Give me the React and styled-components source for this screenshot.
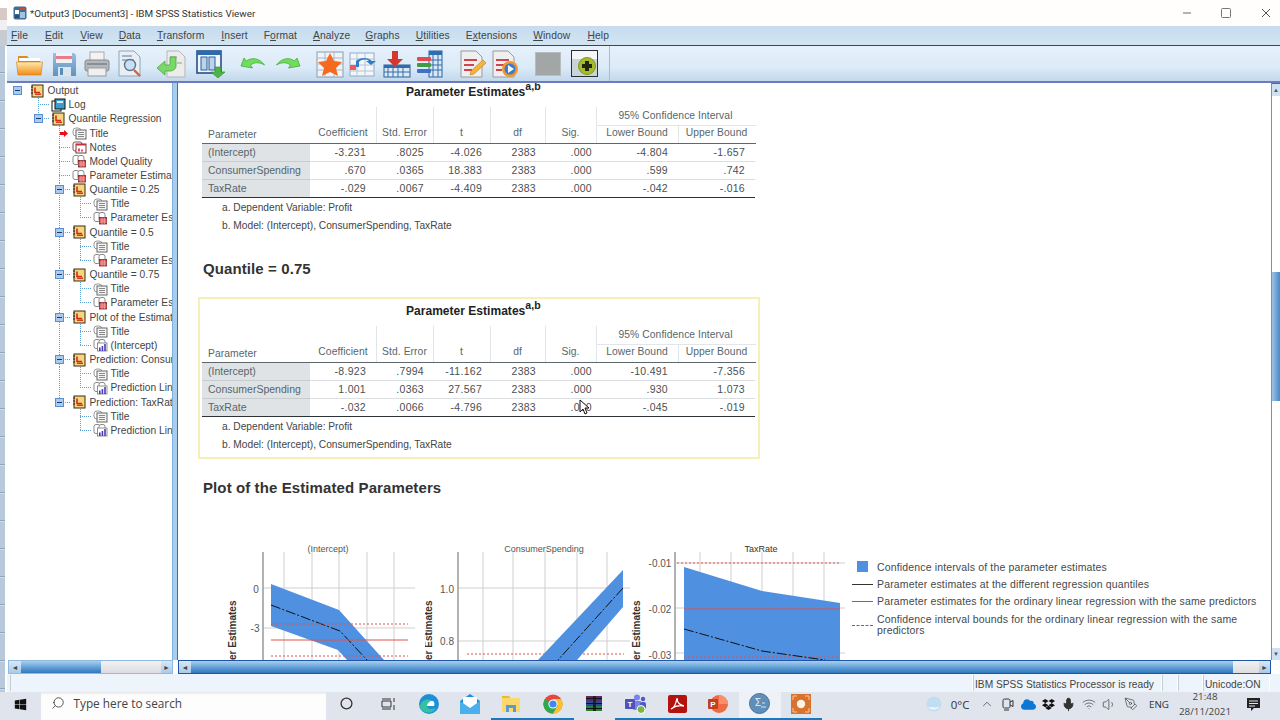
import React from "react";
import styled, { createGlobalStyle } from "styled-components";
import { ChevronUp, Mic, Wifi, Volume1, PenTool, Search, Circle } from "lucide-react";
import { FaWindows, FaDropbox, FaCloud } from "react-icons/fa";

const Global = createGlobalStyle`
  html, body { margin: 0; padding: 0; background: #fff; }
  #root { width: 1280px; height: 720px; overflow: hidden; }
  * { box-sizing: border-box; }
`;

const Screen = styled.div`
  width: 1280px; height: 720px; display: flex; flex-direction: column; overflow: hidden;
  font-family: "Liberation Sans", Arial, sans-serif;
`;
const Desktop = styled.div`display: flex; height: 692px;`;
const Sliver = styled.div`
  width: 7px; display: flex; flex-direction: column;
`;
const SliverTop = styled.div`
  height: 46px; background: linear-gradient(#fff 0 8px, #d8c9c4 8px 20px, #f0f0f0 20px 30px, #c7ccd2 30px);
`;
const SliverBody = styled.div`
  flex: 1; width: 5px;
  background: repeating-linear-gradient(#b7c9da 0 26px, #8ea6bd 26px 27px, #cfdbe6 27px 28px);
`;
const Win = styled.div`flex: 1; display: flex; flex-direction: column; min-width: 0; background: #fff;`;

const TitleBar = styled.div`
  height: 26px; display: flex; align-items: center; padding-left: 6px; background: #fffefc;
  font: 9.9px Roboto, sans-serif; color: #333;
`;
const TitleText = styled.span`margin-left: 3px; flex: 1;`;
const WinControl = styled.span`
  width: 40px; height: 26px; display: flex; align-items: center; justify-content: center;
`;
const WinControls = styled.div`display: flex; margin-right: -6px; & > span:first-child { margin-right: -1px; }`;

const MenuBar = styled.div`
  height: 20px; display: flex; align-items: center; padding: 0 0 1px 4px;
  background: linear-gradient(#c6dcee, #d2e4f2); border-bottom: 1px solid #3c4650;
`;
const MenuItem = styled.span`
  font-size: 10.3px; color: #3f4448; letter-spacing: 0.1px; margin-right: ${p => p.$gap}px; white-space: nowrap;
  & u { text-underline-offset: 1px; }
`;
const Toolbar = styled.div`
  height: 37px; display: flex; align-items: center; padding-left: 6.5px;
  background: linear-gradient(90deg, rgba(0,0,0,0) 0 602px, #aabccd 602px 603px, rgba(0,0,0,0) 603px),
              linear-gradient(#e6f1fb, #dcebf8 60%, #c2d8ec);
  border-bottom: 2px solid #6c7cbc;
`;
const ToolBtn = styled.span`
  width: 33.4px; height: 32px; flex: none; display: flex; align-items: center; justify-content: center;
  margin-left: ${p => p.$gap || 0}px;
`;
const ToolBoxed = styled(ToolBtn)`
  width: 27px; height: 27px; margin-left: ${p => p.$gap || 0}px; border: 1px solid #2b2f33;
  align-items: flex-end; justify-content: flex-end; padding: 0 0 1px 0;
  background: linear-gradient(#f4f6f8 0 30%, #c9d3da 30%);
`;

const Main = styled.div`flex: 1; display: flex; min-height: 0;`;
const TreePanel = styled.div`
  width: 165px; background: #fff; overflow: hidden; flex: none; padding-top: 0.5px;
  font-size: 10.2px; color: #444;
`;
const TreeRow = styled.div`
  height: 14.17px; display: flex; align-items: center; white-space: nowrap;
`;
const Guide = styled.span`
  flex: none; width: 21px; height: 100%; display: flex; align-items: center; justify-content: center;
  background-repeat: no-repeat;
  background-image:
    ${p => p.$v ? "repeating-linear-gradient(#5da0d8 0 1px, transparent 1px 2px)" : "none"},
    ${p => p.$h ? "repeating-linear-gradient(90deg, #5da0d8 0 1px, transparent 1px 2px)" : "none"};
  background-size: 1px ${p => p.$v === "half" ? "50%" : "100%"}, 11px 1px;
  background-position: 10px 0, 10px 50%;
`;
const Toggle = styled.span`
  width: 9px; height: 9px; display: flex; align-items: center; justify-content: center;
  background: #a9cbee; border: 1px solid #5b8fcf; 
  &::before { content: ""; width: 5px; height: 1px; background: #1b3b70; }
`;
const RedArrow = styled.svg`width: 8px; height: 7px; margin-left: 9px; background: #fff;`;
const TreeIcon = styled.svg`width: 15px; height: 14px; flex: none; margin-left: 1.5px;`;
const TreeLabel = styled.span`margin-left: 3px; letter-spacing: 0.04px;`;

const Splitter = styled.div`
  width: 6px; flex: none; background: #a9cdec;
  border-left: 1px solid #7fb0de; border-right: 1px solid #3a6fb8;
`;
const Content = styled.div`
  flex: 1; min-width: 0; overflow: hidden; background: #fff; padding: 0 0 0 20px; position: relative;
`;
const Doc = styled.div`margin-top: -5px;`;
const Pivot = styled.div`
  position: relative; width: 562px; height: 162px; margin-left: 0; padding: 0 0 0 2px;
  border: 2px solid ${p => p.$selected ? "#f6efb6" : "transparent"};
`;
const PivotTitle = styled.div`
  height: 27px; padding: 2px 0 0 204px; line-height: 21px; font-size: 12px; font-weight: 700; color: #222;
  letter-spacing: 0.03px; white-space: nowrap;
  & sup { font-size: 10.5px; line-height: 0; vertical-align: 6px; }
`;
const Table = styled.table`
  border-collapse: collapse; table-layout: fixed; width: 553px; font-size: 10.5px; color: #444;
`;
const Col = styled.col`width: ${p => p.$w}px;`;
const Head = styled.th`
  font-weight: 400; height: ${p => p.$h || 18}px; padding: ${p => p.$pb || 0}px 0 0; padding-top: 0; padding-bottom: ${p => p.$pb || 0}px;
  text-align: center; vertical-align: middle; color: #56666c;
  font-size: 10.3px; letter-spacing: 0.08px;
  border-right: 1px solid ${p => p.$last ? "transparent" : "#e2e6e8"};
  border-bottom: 1px solid ${p => p.$under ? "#e2e6e8" : p.$plain ? "transparent" : "#5d686d"};
`;
const HeadParam = styled(Head)`
  text-align: left; vertical-align: bottom; padding: 0 0 3px 6px; border-right-color: transparent; border-bottom-color: #5d686d;
`;
const RowHead = styled.td`
  height: 18px; padding: 0 0 0 6px; background: #dfe3e5; color: #56666c; white-space: nowrap;
  border-bottom: 1px solid ${p => p.$last ? "#2c3236" : "#c7cccf"};
`;
const Cell = styled.td`
  height: 18px; padding: 0 ${p => p.$pad}px 0 0; text-align: right; letter-spacing: 0.28px; color: #4a4f52;
  border-bottom: 1px solid ${p => p.$last ? "#2c3236" : "#dcdfe1"};
`;
const Footnotes = styled.div`padding-top: 1px;`;
const Footnote = styled.div`
  height: 18px; line-height: 18px; padding-left: 20px; font-size: 10.2px; color: #444; white-space: nowrap;
`;
const Heading = styled.div`
  height: 20px; line-height: 20px; padding-left: 5px; font-size: 15px; font-weight: 700; color: #333; white-space: nowrap;
  letter-spacing: 0.1px;
  margin: ${p => p.$top}px 0 ${p => p.$bottom}px;
`;
const PlotRow = styled.div`display: flex; padding-left: 27px; align-items: flex-start; height: 130px;`;
const PlotSvg = styled.svg`flex: none; display: block; overflow: hidden;`;
const Legend = styled.div`
  width: 415px; margin-left: 5px; padding-top: 19px; font-size: 10.5px; color: #45494c; letter-spacing: 0.15px;
`;
const LegendRow = styled.div`display: flex; min-height: 17px; align-items: center; padding-top: ${p => p.$top || 0}px;`;
const LegendKey = styled.span`
  width: 27px; flex: none; display: flex; justify-content: flex-start;
`;
const Swatch = styled.span`width: 11px; height: 11px; background: #4f90e0; margin: 0 0 3px 7px;`;
const KeyLine = styled.span`
  width: 21px; height: 0; margin-left: 2px; border-top: 1.5px ${p => p.$dot ? "dashed" : "solid"} ${p => p.$c};
`;
const LegendText = styled.span`line-height: 11px;`;
const Pointer = styled.svg`position: absolute; left: 379px; top: 100px; width: 14px; height: 16px;`;

const VScroll = styled.div`
  width: 9px; flex: none; display: flex; flex-direction: column; border-left: 1px solid #5f97d6; background: #fff; border-top: 1px solid #3a6fb8;
`;
const VArrow = styled.div`
  height: 12px; flex: none; background: #cfe2f4; display: flex; align-items: center; justify-content: center;
  color: #555; font-size: 6px; line-height: 1;
`;
const VTrack = styled.div`flex: ${p => p.$f}; background: #fff;`;
const VThumb = styled.div`flex: ${p => p.$f}; background: linear-gradient(90deg, #9cc3e6, #4a88c8);`;

const HRow = styled.div`height: 14px; display: flex;`;
const HScroll = styled.div`
  display: flex; align-items: stretch; border: 1px solid ${p => p.$c}; border-bottom-width: 1px;
  width: ${p => p.$w}px; margin-left: ${p => p.$ml}px; flex: none; background: #eee;
`;
const HArrow = styled.span`
  width: ${p => p.$w}px; flex: none; display: flex; align-items: center; justify-content: center; font-size: 7px; color: #444;
  background: linear-gradient(#d8e8f6, #a8cbea);
`;
const HThumb = styled.span`
  width: ${p => p.$w}px; flex: none; background: linear-gradient(#aacfee, #5f9ed8 55%, #2f77bc);
`;
const HTrack = styled.span`flex: 1; background: linear-gradient(#f2f2f4, #dcdce2);`;

const StatusBar = styled.div`
  height: 18px; display: flex; background: #edf4fb; font-size: 10.2px; color: #444; padding: 1px 0 1px 3px;
`;
const StatusCell = styled.span`
  width: ${p => p.$w}px; flex: none; height: 16px; line-height: 19px; padding-left: 1px; white-space: nowrap; overflow: hidden;
  border-left: 1px solid #c4ccd4; border-right: 1px solid #fff;
`;

const Taskbar = styled.div`
  height: 28px; display: flex; align-items: stretch; background: #e0e5ed; font-family: "Open Sans", sans-serif; color: #333; overflow: hidden;
`;
const StartBtn = styled.span`width: 41px; display: flex; align-items: center; justify-content: center; color: #111; padding-bottom: 4px;`;
const SearchBox = styled.div`
  width: 285px; background: #fdfdfd; display: flex; align-items: center; padding: 0 0 6px 10px; font-size: 11.8px; color: #444; gap: 8.5px;
  box-shadow: inset 0 3px 3px -2px #ddd;
`;
const TaskBtn = styled.span`
  width: ${p => p.$w || 41.4}px; flex: none; display: flex; align-items: center; justify-content: center;
  background: ${p => p.$focus ? "#eef1f5" : "transparent"};
  box-shadow: ${p => p.$on ? "inset 0 -2px 0 #1679c4" : "none"};
  padding-bottom: 5px;
`;
const Tray = styled.div`margin-left: auto; display: flex; align-items: center; padding: 0 14px 4px 0;`;
const TrayItem = styled.span`
  width: ${p => p.$w}px; flex: none; display: flex; align-items: center; justify-content: center; font-size: ${p => p.$fs || 11}px; color: #333;
  margin-left: ${p => p.$ml || 0}px;
`;
const Clock = styled.span`
  width: 58px; height: 30px; flex: none; align-self: flex-start; display: flex; flex-direction: column; align-items: center; justify-content: flex-start;
  font-size: 9.8px; line-height: 15px; color: #444; margin-top: -3px;
`;

/* ---------- toolbar icons ---------- */
const Ico = ({ children, w = 30, h = 28, vb = "0 0 30 28" }) => <svg width={w} height={h} viewBox={vb}>{children}</svg>;

const icons = {
  folder: <Ico><defs><linearGradient id="fo" x1="0" y1="0" x2="0" y2="1"><stop offset="0" stopColor="#ffe9b0"/><stop offset="1" stopColor="#f28c14"/></linearGradient></defs>
    <path d="M3 6h9l2 2h11v5H3z" fill="#d98c20"/><rect x="4" y="8" width="21" height="3" fill="#fff"/><path d="M1.5 12h26l-1.5 13H3z" fill="url(#fo)" stroke="#c9781a" strokeWidth=".6"/></Ico>,
  save: <Ico><defs><linearGradient id="sa" x1="0" y1="0" x2="0" y2="1"><stop offset="0" stopColor="#9cc0de"/><stop offset="1" stopColor="#5f92c0"/></linearGradient></defs><path d="M4 3h21l2 2v21H4z" fill="url(#sa)"/><path d="M7 3h16v10H7z" fill="#f2f2f4"/><path d="M7 6h16v3H7z" fill="#ea7d8c"/><rect x="9" y="17" width="13" height="9" fill="#dbe5ee"/><rect x="11" y="18" width="3" height="7" fill="#5c8db8"/></Ico>,
  print: <Ico><rect x="8" y="2" width="14" height="9" fill="#f3f3f3" stroke="#aaa"/><rect x="3" y="10" width="24" height="11" rx="2" fill="#b4b8bd" stroke="#888"/><rect x="6" y="18" width="18" height="8" fill="#f0f0f0" stroke="#999"/><rect x="5" y="13" width="20" height="2" fill="#8a8f96"/></Ico>,
  preview: <Ico><path d="M4 1h15l6 6v19H4z" fill="#e8eef3" stroke="#8fa6ba"/><path d="M7 5h10v2H7zM7 9h12v2H7z" fill="#9db6cd"/><circle cx="15" cy="15" r="5.5" fill="#c6e0f6" stroke="#66748a" strokeWidth="1.4"/><path d="M19 20l6 6" stroke="#d8623c" strokeWidth="2.4"/></Ico>,
  exportDoc: <Ico><path d="M11 1h12l6 6v20H11z" fill="#ececea" stroke="#b5b5b5"/><path d="M14 6h7v2h-7zM21 12h5v2h-5z" fill="#c2c2c2"/><path d="M20 7v9c0 3-3 5-6 5H9v4L1 18l8-7v4h4c1 0 1-1 1-2V7z" fill="#7ad868" stroke="#4aa840" strokeWidth=".8"/></Ico>,
  designate: <Ico w={32} vb="0 0 32 28"><rect x="1" y="1" width="24" height="22" fill="#f2f6fa" stroke="#23508a" strokeWidth="1.6"/><rect x="1" y="1" width="24" height="4" fill="#2d6ab0"/><rect x="5" y="7" width="6" height="13" fill="#bcd4ea" stroke="#2c5f9c"/><rect x="13" y="7" width="6" height="13" fill="#bcd4ea" stroke="#2c5f9c"/><path d="M19 17h6v5h4l-7 6-7-6h4z" fill="#4cb545" stroke="#2f8c2c" strokeWidth=".6"/></Ico>,
  undo: <Ico><path d="M3 16l3-8 2.5 3c5-4 13-3 18 4-5-3-10-3-14 0l2 3z" fill="#72dc5c" stroke="#45ad3a" strokeWidth=".8"/></Ico>,
  redo: <Ico><path d="M27 16l-3-8-2.5 3c-5-4-13-3-18 4 5-3 10-3 14 0l-2 3z" fill="#72dc5c" stroke="#45ad3a" strokeWidth=".8"/></Ico>,
  star: <Ico><rect x="2" y="2" width="26" height="25" fill="#f0f4f8" stroke="#8a9cb0"/><path d="M2 8h26M2 14h26M2 20h26M10 2v25M19 2v25" stroke="#a8b8ca"/><path d="M15 3l4 8 8 1-6 6 2 8-8-4-8 4 2-8-6-6 8-1z" fill="#f56a1e"/></Ico>,
  back: <Ico><rect x="2" y="3" width="24" height="23" fill="#f3f6fa" stroke="#97aabf"/><path d="M2 9h24M2 15h24M2 21h24M9 3v23M17 3v23" stroke="#b4c4d6"/><rect x="2" y="15" width="6" height="5" fill="#ea5a5a"/><path d="M8 17V11c4-4 12-4 16 0l4 0-5 4-5-4h3c-3-2-7-2-10 1v5z" fill="#2f7cc8"/></Ico>,
  insert: <Ico><rect x="2" y="15" width="26" height="12" fill="#dfe8f0" stroke="#28609c"/><rect x="2" y="15" width="26" height="3" fill="#2f6cb0"/><path d="M6 18v9M11 18v9M16 18v9M21 18v9M2 22h26" stroke="#2f6cb0"/><path d="M10 1h6v8h5l-8 8-8-8h5z" fill="#d8352e"/></Ico>,
  grid: <Ico><rect x="14" y="1" width="13" height="26" fill="#dbe8f4" stroke="#2c62a2"/><rect x="14" y="1" width="13" height="4" fill="#2f6cb0"/><path d="M18 5v22M23 5v22M14 10h13M14 15h13M14 20h13" stroke="#2f6cb0"/><rect x="2" y="7" width="14" height="4" rx="1" fill="#e24b4b"/><rect x="2" y="13" width="14" height="4" rx="1" fill="#3f9c45"/><rect x="2" y="19" width="14" height="4" rx="1" fill="#4270c4"/></Ico>,
  edit: <Ico><path d="M4 1h15l6 6v20H4z" fill="#efeff0" stroke="#999"/><path d="M7 9h13v2H7zM7 14h10v2H7zM7 19h8v2H7z" fill="#d2444c"/><path d="M14 21l12-11 3 3-12 11-4 1z" fill="#f5b53a" stroke="#b87a1a" strokeWidth=".6"/></Ico>,
  play: <Ico><path d="M3 1h15l6 6v20H3z" fill="#efeff0" stroke="#999"/><path d="M6 9h13v2H6zM6 14h8v2H6zM6 19h6v2H6z" fill="#d2444c"/><circle cx="20" cy="19" r="8" fill="#f1982b"/><circle cx="20" cy="19" r="5.5" fill="#3c7cc8"/><path d="M18 15l6 4-6 4z" fill="#f4f8fc"/></Ico>,
  gray: <Ico w={26} h={24} vb="0 0 26 24"><rect x="0.5" y="0.5" width="25" height="23" fill="#a3a6a7" stroke="#b9bcbd"/></Ico>,
  plus: <Ico w={19} h={19} vb="3 3 19 19"><circle cx="12" cy="13" r="8.5" fill="#a6bb2a" stroke="#7f9620"/><path d="M10 8h4v3h3v4h-3v3h-4v-3H7v-4h3z" fill="#1e2a0e"/></Ico>,
};

/* ---------- tree icons ---------- */
const treeGlyph = {
  doc: <><rect x="2" y="1" width="11" height="12" fill="#f6d67c" stroke="#3b2d10"/><path d="M1 3h2M1 6h2M1 9h2" stroke="#222"/><path d="M5 3.5v5h5" stroke="#d8281e" strokeWidth="1.6" fill="none"/><rect x="5" y="9.5" width="6" height="1.4" fill="#d8281e"/></>,
  log: <><rect x="1" y="3" width="9" height="10" fill="#fff" stroke="#111"/><rect x="4" y="1" width="10" height="10" fill="#3d9bd0" stroke="#111"/><rect x="6" y="3" width="6" height="2" fill="#d8eefa"/></>,
  title: <><rect x="1" y="2" width="8" height="8" rx="3" fill="#fff" stroke="#999"/><rect x="4" y="4" width="10" height="9" fill="#f4f4f4" stroke="#666"/><path d="M6 6.5h6M6 8.5h6M6 10.5h6" stroke="#888"/></>,
  notes: <><rect x="1" y="2" width="9" height="9" rx="2" fill="#fff" stroke="#8c4a50"/><rect x="4" y="4" width="10" height="9" fill="#fff" stroke="#6c3a40"/><rect x="4" y="4" width="10" height="1.5" fill="#c2333c"/><path d="M6 8.5h2v3H6zM9 9.5h2v2H9z" fill="#d8555c"/></>,
  table: <><rect x="1" y="1.5" width="6" height="9" rx="2" fill="#fff" stroke="#888"/><rect x="6" y="1.5" width="6" height="9" rx="2" fill="#fff" stroke="#888"/><rect x="6.5" y="6.5" width="7" height="6.5" fill="#d94a4a" stroke="#7c1f22" strokeWidth=".8"/><path d="M6.5 9h7M6.5 11h7M9 6.5V13M11.3 6.5V13" stroke="#f5c8c8" strokeWidth=".6"/></>,
  chart: <><rect x="1" y="1.5" width="6" height="9" rx="2" fill="#fff" stroke="#888"/><rect x="6" y="1.5" width="6" height="9" rx="2" fill="#fff" stroke="#888"/><rect x="4.5" y="5" width="9.5" height="8" fill="#fff" stroke="#777" strokeWidth=".8"/><path d="M6 9.5h1.6V13H6zM8.6 8h1.6v5H8.6zM11.2 6h1.6v7h-1.6z" fill="#4a3ac0"/></>,
};

const tree = [
  { g: [{ t: true }], i: "doc", l: "Output" },
  { g: [{}, { v: "full", h: true }], i: "log", l: "Log" },
  { g: [{}, { v: "half", h: true, t: true }], i: "doc", l: "Quantile Regression" },
  { g: [{}, {}, { v: "full", arrow: true }], i: "title", l: "Title" },
  { g: [{}, {}, { v: "full", h: true }], i: "notes", l: "Notes" },
  { g: [{}, {}, { v: "full", h: true }], i: "table", l: "Model Quality" },
  { g: [{}, {}, { v: "full", h: true }], i: "table", l: "Parameter Estimates" },
];
const group = (label, childLabel, kind, last) => [
  { g: [{}, {}, { v: last ? "half" : "full", h: true, t: true }], i: "doc", l: label },
  { g: [{}, {}, { v: last ? null : "full" }, { v: "full", h: true }], i: "title", l: "Title" },
  { g: [{}, {}, { v: last ? null : "full" }, { v: "half", h: true }], i: kind, l: childLabel },
];
const allRows = [
  ...tree,
  ...group("Quantile = 0.25", "Parameter Estimates", "table"),
  ...group("Quantile = 0.5", "Parameter Estimates", "table"),
  ...group("Quantile = 0.75", "Parameter Estimates", "table"),
  ...group("Plot of the Estimated Parameters", "(Intercept)", "chart"),
  ...group("Prediction: ConsumerSpending", "Prediction Lines", "chart"),
  ...group("Prediction: TaxRate", "Prediction Lines", "chart", true),
];

const Menu = [
  ["F", "ile", 17], ["E", "dit", 17], ["V", "iew", 16], ["D", "ata", 16], ["T", "ransform", 17], ["I", "nsert", 16],
  ["Fo", "rmat", 16, "o"], ["A", "nalyze", 15], ["G", "raphs", 16], ["U", "tilities", 16], ["Ex", "tensions", 16, "x"], ["W", "indow", 17], ["H", "elp", 0],
];

const cols = [108, 66, 57, 57, 55, 51, 82, 77];
const pads = [10, 9, 8, 9, 4, 10, 10];

function PivotTable({ rows, selected, children }) {
  return (
    <Pivot $selected={selected}>
      <PivotTitle>Parameter Estimates<sup>a,b</sup></PivotTitle>
      <Table>
        <colgroup>{cols.map((w, i) => <Col key={i} $w={w} />)}</colgroup>
        <thead>
          <tr>
            <HeadParam rowSpan={2} $h={18}>Parameter</HeadParam>
            <Head $h={17} $plain />
            <Head $plain />
            <Head $plain />
            <Head $plain />
            <Head $plain />
            <Head colSpan={2} $under $last $pb={1}>95% Confidence Interval</Head>
          </tr>
          <tr>
            {["Coefficient", "Std. Error", "t", "df", "Sig.", "Lower Bound", "Upper Bound"].map((h, i) => (
              <Head key={h} $h={18} $pb={3} $last={i === 6}>{h}</Head>
            ))}
          </tr>
        </thead>
        <tbody>
          {rows.map((r, ri) => (
            <tr key={r[0]}>
              <RowHead $last={ri === 2}>{r[0]}</RowHead>
              {r.slice(1).map((v, i) => <Cell key={i} $pad={pads[i]} $last={ri === 2}>{v}</Cell>)}
            </tr>
          ))}
        </tbody>
      </Table>
      <Footnotes>
        <Footnote>a. Dependent Variable: Profit</Footnote>
        <Footnote>b. Model: (Intercept), ConsumerSpending, TaxRate</Footnote>
      </Footnotes>
      {children}
    </Pivot>
  );
}

const T = { fontFamily: "Liberation Sans, sans-serif", fontSize: 10, fill: "#555" };
const Y = { ...T, fontWeight: 700, fontSize: 10, fill: "#333" };
const Grid = "#cfcfcf";

/* plot drawings use page coordinates through the viewBox, top of the row = 540 */
function PlotA() {
  return (
    <PlotSvg width="200" height="130" viewBox="225 540 200 130">
      <text x="328" y="552" textAnchor="middle" style={{ ...T, fontSize: 9 }}>(Intercept)</text>
      {[284, 312, 339, 367, 394].map(x => <line key={x} x1={x} x2={x} y1="552" y2="660" stroke={Grid} />)}
      {[588, 628].map(y => <line key={y} x1="263" x2="415" y1={y} y2={y} stroke={Grid} />)}
      <line x1="263" x2="263" y1="552" y2="660" stroke="#999" strokeWidth="1.5" />
      <text x="256" y="593" textAnchor="middle" style={T}>0</text>
      <text x="255" y="632" textAnchor="middle" style={T}>-3</text>
      <text transform="translate(236 660) rotate(-90)" style={Y}>er Estimates</text>
      <path d="M271 584L339 610L384 660H347L338 650L271 626Z" fill="#4f90e0" />
      <path d="M271 605L340 631L367 660" fill="none" stroke="#111" strokeWidth="1" strokeDasharray="10 2 2 2" />
      <line x1="271" x2="408" y1="640" y2="640" stroke="#e2524f" strokeWidth="1.2" />
      <line x1="271" x2="408" y1="624" y2="624" stroke="#e2524f" strokeDasharray="2 2" />
      <line x1="271" x2="408" y1="656" y2="656" stroke="#e2524f" strokeDasharray="2 2" />
    </PlotSvg>
  );
}
function PlotB() {
  return (
    <PlotSvg width="205" height="130" viewBox="425 540 205 130">
      <text x="544" y="552" textAnchor="middle" style={{ ...T, fontSize: 9 }}>ConsumerSpending</text>
      {[483, 513, 545, 577, 607].map(x => <line key={x} x1={x} x2={x} y1="552" y2="660" stroke={Grid} />)}
      {[588, 641].map(y => <line key={y} x1="458" x2="630" y1={y} y2={y} stroke={Grid} />)}
      <line x1="458" x2="458" y1="552" y2="660" stroke="#999" strokeWidth="1.5" />
      <text x="447" y="593" textAnchor="middle" style={T}>1.0</text>
      <text x="447" y="645" textAnchor="middle" style={T}>0.8</text>
      <text transform="translate(432 660) rotate(-90)" style={Y}>er Estimates</text>
      <line x1="467" x2="624" y1="654" y2="654" stroke="#e2524f" strokeDasharray="2 2" />
      <path d="M623 570V607L577 660H538Z" fill="#4f90e0" />
      <path d="M623 588L558 660" fill="none" stroke="#111" strokeDasharray="10 2 2 2" />
    </PlotSvg>
  );
}
function PlotC() {
  return (
    <PlotSvg width="215" height="130" viewBox="630 540 215 130">
      <text x="761" y="552" textAnchor="middle" style={{ ...T, fontSize: 9, fill: "#333" }}>TaxRate</text>
      {[700, 731, 762, 793, 824].map(x => <line key={x} x1={x} x2={x} y1="552" y2="660" stroke={Grid} />)}
      {[563, 608, 653].map(y => <line key={y} x1="675" x2="845" y1={y} y2={y} stroke={Grid} />)}
      <line x1="675" x2="675" y1="552" y2="660" stroke="#999" strokeWidth="1.5" />
      <text x="660" y="567" textAnchor="middle" style={T}>-0.01</text>
      <text x="660" y="613" textAnchor="middle" style={T}>-0.02</text>
      <text x="660" y="659" textAnchor="middle" style={T}>-0.03</text>
      <text transform="translate(640 660) rotate(-90)" style={Y}>er Estimates</text>
      <line x1="677" x2="840" y1="563" y2="563" stroke="#e2524f" strokeDasharray="2 2" />
      <path d="M684 567L762 591L840 603V660H684Z" fill="#4f90e0" />
      <line x1="684" x2="840" y1="609" y2="609" stroke="#e2524f" strokeWidth="1.2" />
      <line x1="684" x2="840" y1="657" y2="657" stroke="#e2524f" strokeDasharray="2 2" />
      <path d="M684 629L762 651L825 660" fill="none" stroke="#111" strokeDasharray="10 2 2 2" />
    </PlotSvg>
  );
}

const task = {
  edge: <svg width="22" height="22" viewBox="0 0 22 22"><circle cx="11" cy="11" r="10" fill="#1b8fd8"/><path d="M2 13c1-6 8-8 12-5 2 2 2 4 0 5H9c0 3 4 4 9 2-2 5-9 6-13 3-2-1-3-3-3-5z" fill="#35c1a1"/><path d="M9 13c0-3 3-5 5-5 2 0 3 2 2 5z" fill="#fff"/></svg>,
  mail: <svg width="22" height="20" viewBox="0 0 22 20"><path d="M1 7L11 0l10 7v13H1z" fill="#1f90d8"/><path d="M4 3h14v9l-7 4-7-4z" fill="#fff"/><path d="M1 7l10 7 10-7v13H1z" fill="#4ab0ec"/></svg>,
  explorer: <svg width="20" height="18" viewBox="0 0 20 18"><path d="M1 1h7l2 3H1z" fill="#e9b93a"/><rect x="1" y="3" width="18" height="14" fill="#fcd96c"/><rect x="5" y="10" width="10" height="7" fill="#5b9bd0"/><rect x="8" y="13" width="4" height="4" fill="#fcd96c"/></svg>,
  chrome: <svg width="20" height="20" viewBox="0 0 20 20"><circle cx="10" cy="10" r="9.5" fill="#e8453c"/><path d="M10 10L1.8 5A9.5 9.5 0 0 0 10 19.5L15 11z" fill="#2fa84f"/><path d="M10 10l5 1-5 8.5A9.5 9.5 0 0 0 18.2 5H10z" fill="#fbc02d"/><circle cx="10" cy="10" r="4.6" fill="#fff"/><circle cx="10" cy="10" r="3.6" fill="#4285f4"/></svg>,
  rar: <svg width="18" height="16" viewBox="0 0 18 16"><rect x="1" y="0" width="16" height="5" fill="#5a2a6a"/><rect x="1" y="5" width="16" height="5" fill="#274c9c"/><rect x="1" y="10" width="16" height="5" fill="#2b7d3a"/><rect x="8" y="0" width="3" height="15" fill="#222"/><path d="M1 2.5h16M1 7.5h16M1 12.5h16" stroke="#111"/></svg>,
  teams: <svg width="22" height="20" viewBox="0 0 22 20"><circle cx="12" cy="3.5" r="3" fill="#7b83eb"/><circle cx="18" cy="5" r="2.2" fill="#5059c9"/><rect x="8" y="7" width="8" height="9" rx="1" fill="#7b83eb"/><rect x="15" y="8" width="6" height="7" rx="2" fill="#5059c9"/><rect x="0" y="5" width="10" height="10" rx="1" fill="#4b53bc"/><text x="5" y="13" textAnchor="middle" fontSize="8" fontWeight="700" fill="#fff" fontFamily="Liberation Sans">T</text><circle cx="16" cy="15.5" r="4" fill="#7db544" stroke="#fff"/></svg>,
  pdf: <svg width="19" height="18" viewBox="0 0 19 18"><rect width="19" height="18" rx="2" fill="#b3130f"/><path d="M3 14c3-1 5-5 6-11 0 5 3 7 7 8-5-1-9 0-13 3z" fill="none" stroke="#fff" strokeWidth="1.3"/></svg>,
  ppt: <svg width="20" height="18" viewBox="0 0 20 18"><circle cx="11" cy="9" r="9" fill="#ed6c47"/><path d="M11 0a9 9 0 0 1 9 9h-9z" fill="#ff8f6b"/><rect x="0" y="4" width="10" height="10" rx="1" fill="#c43e1c"/><text x="5" y="12" textAnchor="middle" fontSize="8" fontWeight="700" fill="#fff" fontFamily="Liberation Sans">P</text></svg>,
  spss: <svg width="21" height="21" viewBox="0 0 21 21"><circle cx="10.5" cy="10.5" r="10" fill="#5f8fb8"/><circle cx="10.5" cy="10.5" r="10" fill="none" stroke="#47739a"/><text x="9" y="13" textAnchor="middle" fontSize="10" fill="#eaf2f8" fontFamily="Liberation Sans">Σ</text><path d="M12 14h5M13 10h3" stroke="#d6e4ee"/></svg>,
  snag: <svg width="20" height="20" viewBox="0 0 20 20"><rect width="20" height="20" fill="#d9722e"/><circle cx="10" cy="10" r="4.2" fill="#fff3e4"/><path d="M2 6V2h4M14 2h4v4M2 14v4h4M18 14v4h-4" fill="none" stroke="#f8c8a0"/></svg>,
};

export default function App() {
  return (
    <Screen>
      <Global />
      <Desktop>
        <Sliver><SliverTop /><SliverBody /></Sliver>
        <Win>
          <TitleBar>
            <svg width="14" height="14" viewBox="0 0 14 14"><rect x="0.5" y="0.5" width="13" height="13" rx="2" fill="#3f6f98"/><rect x="2" y="4" width="4" height="4" fill="#fff"/><rect x="7" y="2" width="5" height="2" fill="#d8452e"/><rect x="7" y="6" width="5" height="6" fill="#9fc4e2"/><rect x="2" y="9" width="4" height="3" fill="#2b4d6c"/></svg>
            <TitleText>*Output3 [Document3] - IBM SPSS Statistics Viewer</TitleText>
            <WinControls>
              <WinControl><svg width="10" height="10"><path d="M1 5h8" stroke="#666" /></svg></WinControl>
              <WinControl><svg width="10" height="10"><rect x=".5" y=".5" width="9" height="9" rx="1" fill="none" stroke="#777" /></svg></WinControl>
              <WinControl><svg width="10" height="10"><path d="M1 1l8 8M9 1l-8 8" stroke="#555" /></svg></WinControl>
            </WinControls>
          </TitleBar>
          <MenuBar>
            {Menu.map(([a, b, g, rest]) => (
              <MenuItem key={a + b} $gap={g}>
                {rest ? <>{a[0]}<u>{a[1]}</u>{b}</> : <><u>{a}</u>{b}</>}
              </MenuItem>
            ))}
          </MenuBar>
          <Toolbar>
            <ToolBtn>{icons.folder}</ToolBtn>
            <ToolBtn>{icons.save}</ToolBtn>
            <ToolBtn>{icons.print}</ToolBtn>
            <ToolBtn>{icons.preview}</ToolBtn>
            <ToolBtn $gap={7.5}>{icons.exportDoc}</ToolBtn>
            <ToolBtn $gap={7.5}>{icons.designate}</ToolBtn>
            <ToolBtn $gap={7.5}>{icons.undo}</ToolBtn>
            <ToolBtn $gap={1.5}>{icons.redo}</ToolBtn>
            <ToolBtn $gap={8.5}>{icons.star}</ToolBtn>
            <ToolBtn>{icons.back}</ToolBtn>
            <ToolBtn>{icons.insert}</ToolBtn>
            <ToolBtn>{icons.grid}</ToolBtn>
            <ToolBtn $gap={8.5}>{icons.edit}</ToolBtn>
            <ToolBtn>{icons.play}</ToolBtn>
            <ToolBtn $gap={9.5}>{icons.gray}</ToolBtn>
            <ToolBoxed $gap={6}>{icons.plus}</ToolBoxed>
          </Toolbar>
          <Main>
            <TreePanel>
              {allRows.map((r, i) => (
                <TreeRow key={i}>
                  {r.g.map((g, j) => (
                    <Guide key={j} $v={g.v} $h={g.h}>
                      {g.t && <Toggle />}
                      {g.arrow && <RedArrow viewBox="0 0 8 7"><path d="M0 2h4V0l4 3.5L4 7V5H0z" fill="#e8101a" /></RedArrow>}
                    </Guide>
                  ))}
                  <TreeIcon viewBox="0 0 15 14">{treeGlyph[r.i]}</TreeIcon>
                  <TreeLabel>{r.l}</TreeLabel>
                </TreeRow>
              ))}
            </TreePanel>
            <Splitter />
            <Content>
              <Doc>
                <PivotTable rows={[
                  ["(Intercept)", "-3.231", ".8025", "-4.026", "2383", ".000", "-4.804", "-1.657"],
                  ["ConsumerSpending", ".670", ".0365", "18.383", "2383", ".000", ".599", ".742"],
                  ["TaxRate", "-.029", ".0067", "-4.409", "2383", ".000", "-.042", "-.016"],
                ]} />
                <Heading $top={19} $bottom={18}>Quantile = 0.75</Heading>
                <PivotTable selected rows={[
                  ["(Intercept)", "-8.923", ".7994", "-11.162", "2383", ".000", "-10.491", "-7.356"],
                  ["ConsumerSpending", "1.001", ".0363", "27.567", "2383", ".000", ".930", "1.073"],
                  ["TaxRate", "-.032", ".0066", "-4.796", "2383", ".000", "-.045", "-.019"],
                ]}>
                  <Pointer viewBox="0 0 14 16">
                    <path d="M1 1v12l3-3 2 5 2-1-2-5h4z" fill="#fff" stroke="#111" />
                  </Pointer>
                </PivotTable>
                <Heading $top={19} $bottom={42}>Plot of the Estimated Parameters</Heading>
                <PlotRow>
                  <PlotA /><PlotB /><PlotC />
                  <Legend>
                    <LegendRow><LegendKey><Swatch /></LegendKey><LegendText>Confidence intervals of the parameter estimates</LegendText></LegendRow>
                    <LegendRow><LegendKey><KeyLine $c="#333" /></LegendKey><LegendText>Parameter estimates at the different regression quantiles</LegendText></LegendRow>
                    <LegendRow><LegendKey><KeyLine $c="#dd3c3c" /></LegendKey><LegendText>Parameter estimates for the ordinary linear regression with the same predictors</LegendText></LegendRow>
                    <LegendRow $top={4}><LegendKey><KeyLine $c="#dd3c3c" $dot /></LegendKey><LegendText>Confidence interval bounds for the ordinary linear regression with the same predictors</LegendText></LegendRow>
                  </Legend>
                </PlotRow>
              </Doc>
            </Content>
            <VScroll>
              <VArrow>▲</VArrow>
              <VTrack $f={176} />
              <VThumb $f={128} />
              <VTrack $f={247} />
              <VArrow>▼</VArrow>
            </VScroll>
          </Main>
          <HRow>
            <HScroll $c="#8fbbe0" $w={165} $ml={1}>
              <HArrow $w={12}>◄</HArrow><HThumb $w={80} /><HTrack /><HArrow $w={11}>►</HArrow>
            </HScroll>
            <HScroll $c="#1f56a8" $w={1093} $ml={5}>
              <HArrow $w={12}>◄</HArrow><HThumb $w={1042} /><HTrack /><HArrow $w={11}>►</HArrow>
            </HScroll>
          </HRow>
          <StatusBar>
            <StatusCell $w={963} />
            <StatusCell $w={189}>IBM SPSS Statistics Processor is ready</StatusCell>
            <StatusCell $w={16} />
            <StatusCell $w={25} />
            <StatusCell $w={67}>Unicode:ON</StatusCell>
          </StatusBar>
        </Win>
      </Desktop>
      <Taskbar>
        <StartBtn><FaWindows size={13} /></StartBtn>
        <SearchBox><Search size={14} strokeWidth={1.5} style={{ transform: "scaleX(-1)" }} />Type here to search</SearchBox>
        <TaskBtn $w={41}><Circle size={13} strokeWidth={2.4} /></TaskBtn>
        <TaskBtn $w={41}>
          <svg width="14" height="14" viewBox="0 0 14 14"><path d="M1 2h9M1 12h9M1 4v6h9V4H1M13 1v4M13 8v5" fill="none" stroke="#333" /></svg>
        </TaskBtn>
        <TaskBtn>{task.edge}</TaskBtn>
        <TaskBtn>{task.mail}</TaskBtn>
        <TaskBtn $on>{task.explorer}</TaskBtn>
        <TaskBtn $on>{task.chrome}</TaskBtn>
        <TaskBtn>{task.rar}</TaskBtn>
        <TaskBtn $on>{task.teams}</TaskBtn>
        <TaskBtn $on>{task.pdf}</TaskBtn>
        <TaskBtn $on>{task.ppt}</TaskBtn>
        <TaskBtn $on $focus>{task.spss}</TaskBtn>
        <TaskBtn $on>{task.snag}</TaskBtn>
        <Tray>
          <TrayItem $w={27}><svg width="16" height="16" viewBox="0 0 16 16"><circle cx="8" cy="8" r="7.5" fill="#c2dcf0"/><path d="M2 11c2 3 8 4 12 0-3 1-8 0-12 0z" fill="#eef6fc"/></svg></TrayItem>
          <TrayItem $w={26} $fs={11.5}>0°C</TrayItem>
          <TrayItem $w={20.6} $ml={4}><ChevronUp size={14} strokeWidth={1.2} /></TrayItem>
          <TrayItem $w={20.6}>
            <svg width="12" height="14" viewBox="0 0 12 14"><rect x="1" y="2" width="7" height="9" rx="1.5" fill="none" stroke="#333"/><path d="M8 5l3-1.5v6L8 8M2 13h5" fill="none" stroke="#333"/></svg>
          </TrayItem>
          <TrayItem $w={20.6}><FaCloud size={15} color="#0a78d4" /></TrayItem>
          <TrayItem $w={19}><FaDropbox size={13} color="#111" /></TrayItem>
          <TrayItem $w={20.6}><Mic size={15} fill="#333" strokeWidth={1.5} /></TrayItem>
          <TrayItem $w={20.6}><Wifi size={14} strokeWidth={1.1} /></TrayItem>
          <TrayItem $w={21}><Volume1 size={15} strokeWidth={1.1} /></TrayItem>
          <TrayItem $w={22}><PenTool size={14} strokeWidth={1.1} /></TrayItem>
          <TrayItem $w={34} $fs={9.8}>ENG</TrayItem>
          <Clock><span>21:48</span><span>28/11/2021</span></Clock>
          <TrayItem $w={26} $ml={6}>
            <svg width="15" height="15" viewBox="0 0 15 15"><path d="M1 1h13v10H8l-3 3v-3H1z" fill="#222"/><path d="M3 4h9M3 6.5h9M3 9h6" stroke="#e0e5ed"/></svg>
          </TrayItem>
        </Tray>
      </Taskbar>
    </Screen>
  );
}
